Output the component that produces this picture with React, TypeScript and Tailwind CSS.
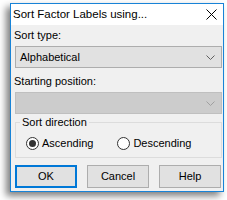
import React from 'react';

const font = { fontFamily: '"Liberation Sans", Arial, sans-serif' };

function Chevron({ color = '#606060' }: { color?: string }) {
  return (
    <svg width="9" height="5" viewBox="0 0 9 5" fill="none">
      <path d="M0.5 0.5L4.5 4.5L8.5 0.5" stroke={color} strokeWidth="1" />
    </svg>
  );
}

function Radio({ checked, label }: { checked: boolean; label: string }) {
  return (
    <label className="flex items-center gap-[3px]">
      <span className="flex h-[13px] w-[13px] items-center justify-center rounded-full border border-[#333333] bg-white">
        {checked && <span className="h-[7px] w-[7px] rounded-full bg-[#333333]" />}
      </span>
      <span>{label}</span>
    </label>
  );
}

function Button({ label, isDefault }: { label: string; isDefault?: boolean }) {
  return (
    <button
      className={`h-[23px] w-[62px] bg-[#e1e1e1] text-black ${
        isDefault ? 'border-2 border-[#0078d7]' : 'border border-[#adadad]'
      }`}
    >
      {label}
    </button>
  );
}

export default function App() {
  return (
    <div className="h-[200px] w-[227px] bg-white pl-[10px] pt-[3px]" style={font}>
      <div className="flex h-[189px] w-[214px] flex-col border border-[#1883d7] bg-[#f0f0f0] text-[11.5px] leading-[15px] text-black shadow-[-4px_4px_7px_rgba(0,0,0,0.5)]">
        <div className="flex h-[21px] items-center justify-between bg-white pl-[2px] pr-[6px] text-[11.5px]">
          <span>Sort Factor Labels using...</span>
          <svg width="11" height="11" viewBox="0 0 11 11">
            <path d="M0.5 0.5L10.5 10.5M10.5 0.5L0.5 10.5" stroke="#000" strokeWidth="1" />
          </svg>
        </div>
        <div className="flex flex-col pl-[3px] pr-px text-[11px]">
          <span className="mt-[3px]">Sort type:</span>
          <div className="ml-px mt-[3px] flex h-[22px] items-center justify-between border border-[#adadad] bg-[#e1e1e1] pl-[4px] pr-[6px]">
            <span>Alphabetical</span>
            <Chevron />
          </div>
          <span className="mt-[6px]">Starting position:</span>
          <div className="ml-px mt-[3px] flex h-[22px] items-center justify-end border border-[#bfbfbf] bg-[#cccccc] pr-[6px]">
            <Chevron color="#a0a0a0" />
          </div>
          <fieldset className="ml-px mt-px h-[43px] border border-[#dcdcdc]">
            <legend className="ml-[4px] px-[2px]">Sort direction</legend>
            <div className="ml-[10px] mt-[6px] flex items-center gap-[24px]">
              <Radio checked label="Ascending" />
              <Radio checked={false} label="Descending" />
            </div>
          </fieldset>
          <div className="ml-px mt-[7px] flex gap-[10px]">
            <Button label="OK" isDefault />
            <Button label="Cancel" />
            <Button label="Help" />
          </div>
        </div>
      </div>
    </div>
  );
}
